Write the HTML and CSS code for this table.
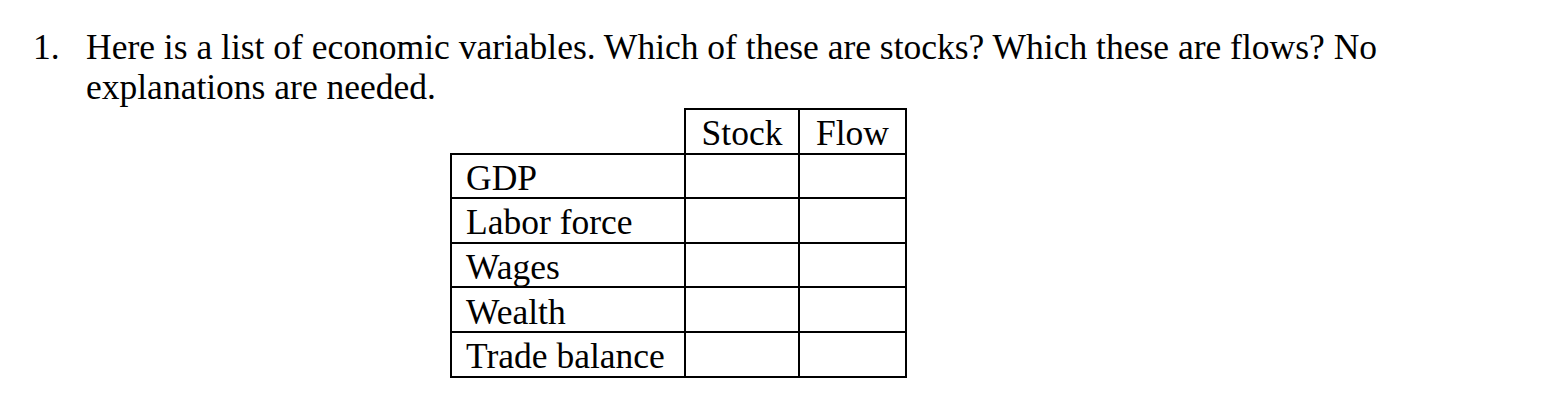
FILE: index.html
```html
<!DOCTYPE html>
<html>
<head>
<meta charset="utf-8">
<link rel="stylesheet" href="styles.css">
</head>
<body>
<div class="page">
  <div class="item">
    <span class="num">1.</span>
    <div class="body">
      <p class="question">Here is a list of economic variables. Which of these are stocks? Which these are flows? No explanations are needed.</p>
      <table class="grid">
        <tr class="head">
          <td class="blank"></td>
          <td class="hc c2">Stock</td>
          <td class="hc c3">Flow</td>
        </tr>
        <tr><td class="label">GDP</td><td></td><td></td></tr>
        <tr><td class="label">Labor force</td><td></td><td></td></tr>
        <tr><td class="label">Wages</td><td></td><td></td></tr>
        <tr><td class="label">Wealth</td><td></td><td></td></tr>
        <tr><td class="label">Trade balance</td><td></td><td></td></tr>
      </table>
    </div>
  </div>
</div>
</body>
</html>
```
FILE: styles.css
```css
html, body {
  margin: 0;
  padding: 0;
  background: #ffffff;
}
.page {
  font-family: "Liberation Serif", "Times New Roman", serif;
  color: #000;
  font-size: 35.5px;
  line-height: 40px;
  padding: 27px 0 0 33px;
}
.item {
  display: flex;
}
.num {
  width: 53px;
  flex: none;
}
.body {
  flex: 1;
}
.question {
  margin: 0;
  width: 1400px;
}
.grid {
  border-collapse: collapse;
  margin-left: 364px;
  margin-top: 1px;
  font-size: 35.5px;
  line-height: 34px;
}
.grid td {
  border: 2px solid #000;
  height: 38.6px;
  padding: 4px 0 0 0;
  vertical-align: middle;
}
.grid td.blank {
  border-top: none;
  border-left: none;
  width: 233px;
}
.grid td.c2 { width: 112px; }
.grid td.c3 { width: 105px; }
.grid td.hc {
  text-align: center;
}
.grid td.label {
  padding-left: 14px;
}
```
